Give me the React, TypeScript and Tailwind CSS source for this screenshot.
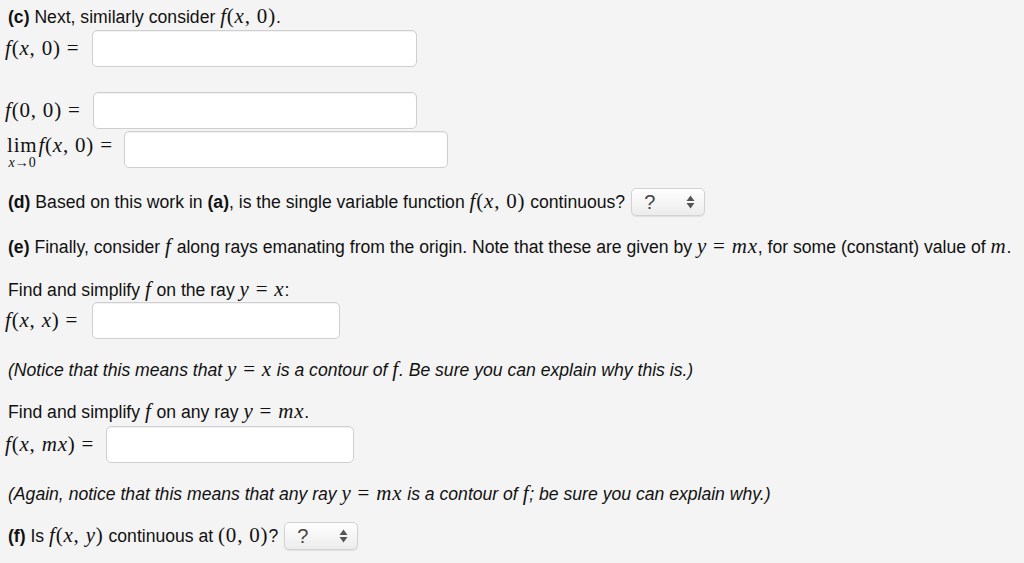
import React from 'react';

function I({ children }: { children: React.ReactNode }) {
  return <span className="italic">{children}</span>;
}

function M({ children, className = '' }: { children: React.ReactNode; className?: string }) {
  return (
    <span className={`font-['Liberation_Serif',serif] not-italic text-[21px] tracking-[0.8px] whitespace-nowrap ${className}`}>
      {children}
    </span>
  );
}

function Eq() {
  return <span className="mx-[6px]">=</span>;
}

function Box({ w }: { w: string }) {
  return <div className={`${w} h-[37px] shrink-0 bg-white border border-[#cfcfcf] rounded-[5px] shadow-[inset_0_1px_1px_rgba(0,0,0,0.06)]`} />;
}

function Pick() {
  return (
    <div className="w-[74px] h-[28px] ml-[6px] flex items-center justify-between pl-[12px] pr-[9px] rounded-[5px] border border-[#d2d2d2] bg-gradient-to-b from-white to-[#ececec] shadow-[0_1px_1px_rgba(0,0,0,0.08)]">
      <span className="text-[20px] text-[#444] leading-none">?</span>
      <svg width="9" height="14" viewBox="0 0 9 14">
        <path d="M4.5 0.5 L8.5 6 L0.5 6 Z" fill="#555" />
        <path d="M4.5 13.5 L8.5 8 L0.5 8 Z" fill="#555" />
      </svg>
    </div>
  );
}

export default function App() {
  return (
    <div className="w-[1024px] h-[563px] bg-[#f4f4f4] font-['Liberation_Sans',Arial,sans-serif] text-[17.6px] text-[#111] overflow-hidden">
      <div className="pl-[8px]">
        <div className="mt-[6px] h-[22px] flex items-center whitespace-nowrap">
          <b>(c)</b>&nbsp;Next, similarly consider&nbsp;
          <M><I>f</I>(<I>x</I>, 0)</M>.
        </div>
        <div className="mt-[2px] h-[37px] flex items-center -ml-[3px]">
          <M className="w-[87px]"><I>f</I>(<I>x</I>, 0)<Eq /></M>
          <Box w="w-[325px]" />
        </div>
        <div className="mt-[25px] h-[37px] flex items-center -ml-[3px]">
          <M className="w-[88px]"><I>f</I>(0, 0)<Eq /></M>
          <Box w="w-[324px]" />
        </div>
        <div className="mt-[2px] h-[36px] flex items-center -ml-[1px]">
          <M className="w-[117px] flex items-baseline pt-[6px]">
            <span className="flex flex-col items-center leading-[18px]">
              <span>lim</span>
              <span className="mt-[3px] text-[14px] leading-[11px] tracking-normal">
                <I>x</I>→0
              </span>
            </span>
            <span className="ml-[1px] leading-[18px]"><I>f</I>(<I>x</I>, 0)<Eq /></span>
          </M>
          <Box w="w-[324px]" />
        </div>
        <div className="mt-[21px] h-[28px] flex items-center whitespace-nowrap">
          <b>(d)</b>&nbsp;Based on this work in&nbsp;<b>(a)</b>, is the single variable function&nbsp;
          <M><I>f</I>(<I>x</I>, 0)</M>&nbsp;continuous?
          <Pick />
        </div>
        <div className="mt-[20px] h-[22px] flex items-center whitespace-nowrap">
          <b>(e)</b>&nbsp;Finally, consider&nbsp;<M><I>f</I></M>&nbsp;along rays emanating from the origin. Note that these are given by&nbsp;
          <M><I>y</I><Eq /><I>mx</I></M>, for some (constant) value of&nbsp;<M><I>m</I></M>.
        </div>
        <div className="mt-[21px] h-[22px] flex items-center whitespace-nowrap">
          Find and simplify&nbsp;<M><I>f</I></M>&nbsp;on the ray&nbsp;<M><I>y</I><Eq /><I>x</I></M>:
        </div>
        <div className="mt-[1px] h-[37px] flex items-center -ml-[3px]">
          <M className="w-[87px]"><I>f</I>(<I>x</I>, <I>x</I>)<Eq /></M>
          <Box w="w-[248px]" />
        </div>
        <div className="mt-[20px] h-[22px] flex items-center italic whitespace-nowrap">
          (Notice that this means that&nbsp;<M><I>y</I><Eq /><I>x</I></M>&nbsp;is a contour of&nbsp;<M><I>f</I></M>. Be sure you can explain why this is.)
        </div>
        <div className="mt-[20px] h-[22px] flex items-center whitespace-nowrap">
          Find and simplify&nbsp;<M><I>f</I></M>&nbsp;on any ray&nbsp;<M><I>y</I><Eq /><I>mx</I></M>.
        </div>
        <div className="mt-[3px] h-[37px] flex items-center -ml-[3px]">
          <M className="w-[101px]"><I>f</I>(<I>x</I>, <I>mx</I>)<Eq /></M>
          <Box w="w-[248px]" />
        </div>
        <div className="mt-[20px] h-[22px] flex items-center italic whitespace-nowrap">
          (Again, notice that this means that any ray&nbsp;<M><I>y</I><Eq /><I>mx</I></M>&nbsp;is a contour of&nbsp;<M><I>f</I></M>; be sure you can explain why.)
        </div>
        <div className="mt-[17px] h-[28px] flex items-center whitespace-nowrap">
          <b>(f)</b>&nbsp;Is&nbsp;<M><I>f</I>(<I>x</I>, <I>y</I>)</M>&nbsp;continuous at&nbsp;<M>(0, 0)</M>?
          <Pick />
        </div>
      </div>
    </div>
  );
}
